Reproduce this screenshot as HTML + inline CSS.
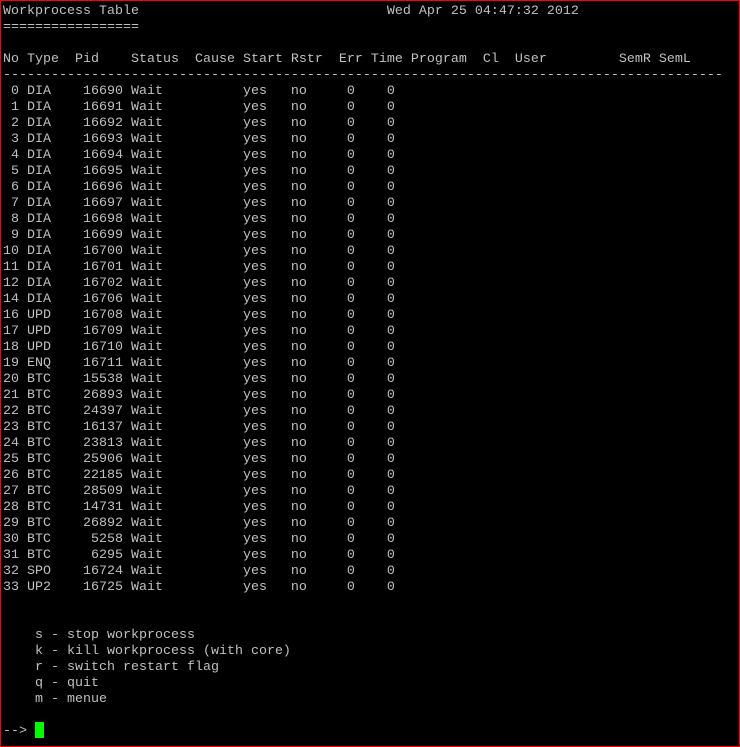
<!DOCTYPE html>
<html><head><meta charset="utf-8"><style>
html,body{margin:0;padding:0;background:#000;}
body{width:740px;height:747px;box-sizing:border-box;border:1px solid #f00;overflow:hidden;position:relative;}
pre{position:absolute;left:2px;top:3px;margin:0;font-family:"Liberation Mono",monospace;font-size:13.33px;line-height:16px;color:#c0c0c0;letter-spacing:0;}
.cur{position:absolute;left:34px;top:721px;width:9px;height:16px;background:#00ff00;}
</style></head><body><pre>Workprocess Table                               Wed Apr 25 04:47:32 2012
=================

No Type  Pid    Status  Cause Start Rstr  Err Time Program  Cl  User         SemR SemL
------------------------------------------------------------------------------------------
 0 DIA    16690 Wait          yes   no     0    0
 1 DIA    16691 Wait          yes   no     0    0
 2 DIA    16692 Wait          yes   no     0    0
 3 DIA    16693 Wait          yes   no     0    0
 4 DIA    16694 Wait          yes   no     0    0
 5 DIA    16695 Wait          yes   no     0    0
 6 DIA    16696 Wait          yes   no     0    0
 7 DIA    16697 Wait          yes   no     0    0
 8 DIA    16698 Wait          yes   no     0    0
 9 DIA    16699 Wait          yes   no     0    0
10 DIA    16700 Wait          yes   no     0    0
11 DIA    16701 Wait          yes   no     0    0
12 DIA    16702 Wait          yes   no     0    0
14 DIA    16706 Wait          yes   no     0    0
16 UPD    16708 Wait          yes   no     0    0
17 UPD    16709 Wait          yes   no     0    0
18 UPD    16710 Wait          yes   no     0    0
19 ENQ    16711 Wait          yes   no     0    0
20 BTC    15538 Wait          yes   no     0    0
21 BTC    26893 Wait          yes   no     0    0
22 BTC    24397 Wait          yes   no     0    0
23 BTC    16137 Wait          yes   no     0    0
24 BTC    23813 Wait          yes   no     0    0
25 BTC    25906 Wait          yes   no     0    0
26 BTC    22185 Wait          yes   no     0    0
27 BTC    28509 Wait          yes   no     0    0
28 BTC    14731 Wait          yes   no     0    0
29 BTC    26892 Wait          yes   no     0    0
30 BTC     5258 Wait          yes   no     0    0
31 BTC     6295 Wait          yes   no     0    0
32 SPO    16724 Wait          yes   no     0    0
33 UP2    16725 Wait          yes   no     0    0


    s - stop workprocess
    k - kill workprocess (with core)
    r - switch restart flag
    q - quit
    m - menue

--&gt; </pre><div class="cur"></div></body></html>
